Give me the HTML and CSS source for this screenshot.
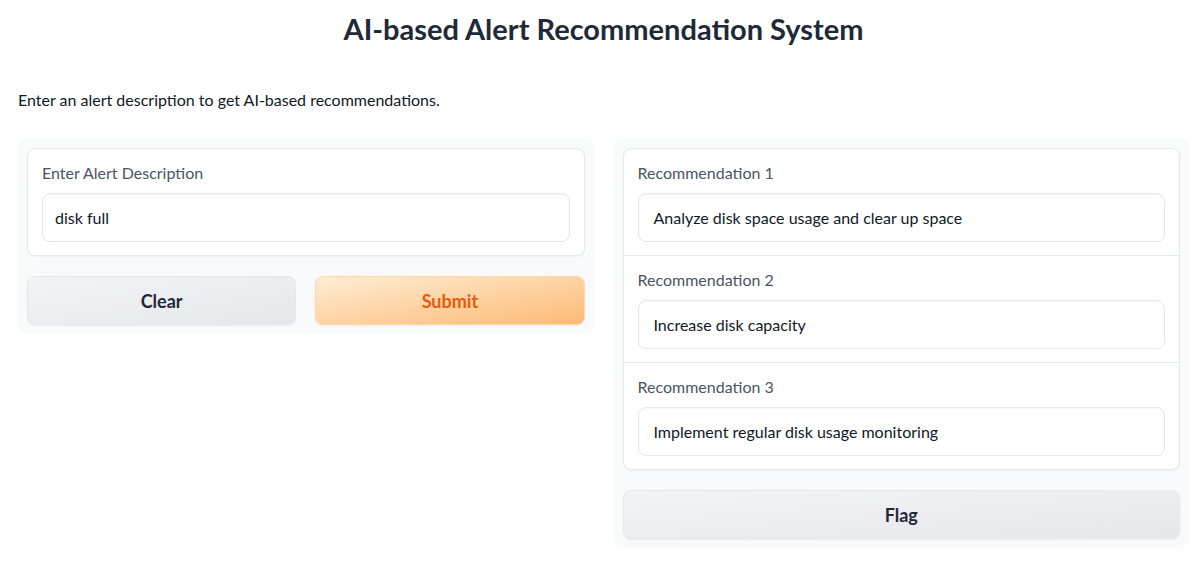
FILE: index.html
```html
<!DOCTYPE html>
<html lang="en">
<head>
    <meta charset="UTF-8">
    <meta name="viewport" content="width=device-width, initial-scale=1.0">
    <title>AI-based Alert Recommendation System</title>
    <link rel="stylesheet" href="styles.css">
</head>
<body>
    <div class="app">
        <h1 class="title">AI-based Alert Recommendation System</h1>
        <p class="description">Enter an alert description to get AI-based recommendations.</p>

        <div class="columns">
            <!-- Input side -->
            <div class="panel">
                <div class="block">
                    <div class="field">
                        <span class="label">Enter Alert Description</span>
                        <div class="textbox">disk full</div>
                    </div>
                </div>
                <div class="button-row">
                    <button class="btn btn-secondary">Clear</button>
                    <button class="btn btn-primary">Submit</button>
                </div>
            </div>

            <!-- Output side -->
            <div class="panel">
                <div class="block">
                    <div class="field">
                        <span class="label">Recommendation 1</span>
                        <div class="textbox output">Analyze disk space usage and clear up space</div>
                    </div>
                    <div class="field">
                        <span class="label">Recommendation 2</span>
                        <div class="textbox output">Increase disk capacity</div>
                    </div>
                    <div class="field">
                        <span class="label">Recommendation 3</span>
                        <div class="textbox output">Implement regular disk usage monitoring</div>
                    </div>
                </div>
                <button class="btn btn-secondary btn-wide">Flag</button>
            </div>
        </div>
    </div>
</body>
</html>
```

FILE: styles.css
```css
html, body {
    margin: 0;
    padding: 0;
    background: #ffffff;
}

body {
    font-family: Lato, "Open Sans", sans-serif;
    color: #1f2937;
}

.app {
    padding: 12px 10px 0 17px;
}

.title {
    margin: 0;
    font-size: 29px;
    line-height: 34px;
    font-weight: 700;
    text-align: center;
    color: #1f2937;
}

.description {
    margin: 42px 0 0 1px;
    font-size: 16px;
    line-height: 24px;
    color: #111827;
}

.columns {
    display: flex;
    gap: 18px;
    align-items: flex-start;
    margin-top: 26px;
}

/* columns */
.panel {
    flex: 1;
    display: flex;
    flex-direction: column;
    gap: 20px;
    padding: 10px 10px 9px;
    background: #f9fafb;
    border-radius: 10px;
}

.block {
    background: #ffffff;
    border: 1px solid #e5e7eb;
    border-radius: 8px;
    box-shadow: 0 1px 2px rgba(0, 0, 0, 0.04);
}

.field {
    padding: 14px 14px 13px;
}

.field + .field {
    border-top: 1px solid #e5e7eb;
}

.label {
    display: block;
    font-size: 16px;
    line-height: 20px;
    color: #4b5563;
    margin-bottom: 10px;
}

.textbox {
    height: 47px;
    line-height: 47px;
    padding: 0 12px;
    border: 1px solid #e5e7eb;
    border-radius: 8px;
    box-shadow: inset 0 1px 2px rgba(0, 0, 0, 0.04);
    font-size: 16px;
    color: #111827;
}

.textbox.output {
    padding: 0 15px;
}

/* buttons */
.button-row {
    display: flex;
    gap: 19px;
}

.btn {
    flex: 1;
    height: 49px;
    border-radius: 8px;
    font-family: inherit;
    font-size: 18px;
    font-weight: 700;
    cursor: pointer;
}

.btn-wide {
    flex: none;
    width: 100%;
}

.btn-secondary {
    border: 1px solid #e5e7eb;
    background: linear-gradient(to bottom right, #f3f4f6, #e5e7eb);
    color: #1f2937;
    box-shadow: 0 1px 2px rgba(0, 0, 0, 0.05);
}

.btn-primary {
    border: 1px solid #fed7aa;
    background: linear-gradient(to bottom right, #ffedd5, #fdba74);
    color: #ea580c;
    box-shadow: 0 1px 2px rgba(0, 0, 0, 0.05);
}
```
